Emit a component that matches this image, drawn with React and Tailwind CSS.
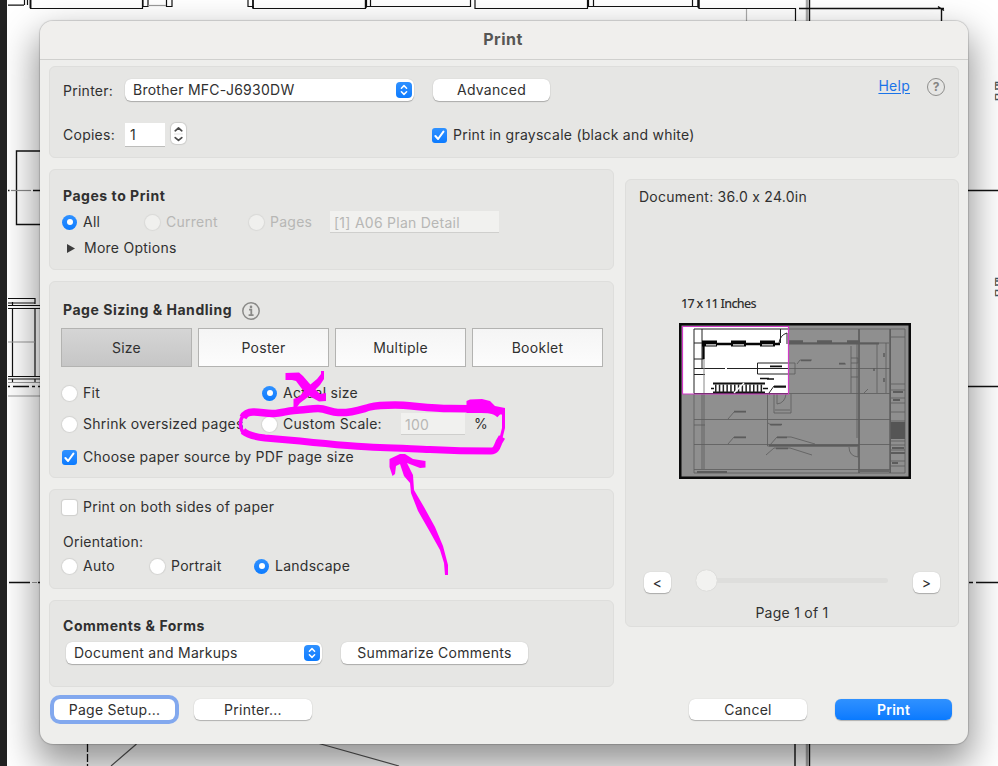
import { useState } from "react";
import clsx from "clsx";

const Panel = ({ className, children }) => (
  <section className={clsx("rounded-[6px] border border-[#dededc] bg-[#e6e6e4]", className)}>
    {children}
  </section>
);

const Button = ({ className, children }) => (
  <button
    className={clsx(
      "flex shrink-0 items-center justify-center rounded-[6px] leading-none shadow-[0_1px_1px_rgba(0,0,0,0.24),0_0_1px_rgba(0,0,0,0.2)]",
      className
    )}
  >
    {children}
  </button>
);

const Radio = ({ label, checked, disabled, onSelect, className }) => (
  <button
    onClick={onSelect}
    disabled={disabled}
    className={clsx("flex h-4 shrink-0 items-center gap-[6px] whitespace-nowrap text-left", disabled && "text-[#b7b7b5]", className)}
  >
    <span
      className={clsx(
        "flex size-[15px] shrink-0 items-center justify-center rounded-full",
        checked
          ? "bg-linear-to-b from-[#2f91ff] to-[#0a7bff]"
          : disabled
            ? "bg-[#f0f0ee] shadow-[0_0_1px_1px_rgba(0,0,0,0.06)]"
            : "bg-white shadow-[0_0_1px_1px_rgba(0,0,0,0.08)]"
      )}
    >
      {checked && <span className="size-[6px] rounded-full bg-white" />}
    </span>
    {label}
  </button>
);

const Checkbox = ({ label, checked, onToggle, className }) => (
  <button onClick={onToggle} className={clsx("flex h-4 shrink-0 items-center gap-[6px] whitespace-nowrap", className)}>
    <span
      className={clsx(
        "flex size-[15px] shrink-0 items-center justify-center rounded-[3px]",
        checked ? "bg-linear-to-b from-[#2f91ff] to-[#0a7bff]" : "bg-white shadow-[0_0_1px_1px_rgba(0,0,0,0.1)]"
      )}
    >
      {checked && (
        <svg width="11" height="11" viewBox="0 0 11 11" fill="none" stroke="#fff" strokeWidth="2" strokeLinecap="round" strokeLinejoin="round">
          <path d="M1.4 6 4.1 9 9.4 1.6" />
        </svg>
      )}
    </span>
    {label}
  </button>
);

const Select = ({ value, className }) => (
  <button
    className={clsx(
      "flex shrink-0 items-center justify-between rounded-[6px] bg-white pr-[2px] pl-2 leading-none shadow-[0_1px_1px_rgba(0,0,0,0.24),0_0_1px_rgba(0,0,0,0.2)]",
      className
    )}
  >
    {value}
    <span className="flex size-4 items-center justify-center rounded-[4px] bg-linear-to-b from-[#2f91ff] to-[#0a7bff]">
      <svg width="8" height="12" viewBox="0 0 8 12" fill="none" stroke="#fff" strokeWidth="1.5" strokeLinecap="round" strokeLinejoin="round">
        <path d="M1.4 4.2 4 1.6l2.6 2.6M1.4 7.8 4 10.4l2.6-2.6" />
      </svg>
    </span>
  </button>
);

const Heading = ({ className, children }) => (
  <h2 className={clsx("font-bold tracking-[0.54px]", className)}>{children}</h2>
);

const InfoIcon = () => (
  <svg width="18" height="18" viewBox="0 0 18 18" className="ml-[10px]" fill="none" stroke="#8a8a88" strokeWidth="1.5">
    <circle cx="9" cy="9" r="8.2" />
    <path d="M7 7.7h2.3v5.3M6.600 13.200h5" strokeWidth="1.8" />
    <circle cx="9" cy="4.900" r="1.3" fill="#8a8a88" stroke="none" />
  </svg>
);

// Drawing sheet that sits behind the dialog
const SheetBackground = () => (
  <svg className="absolute inset-0" width="998" height="766" viewBox="0 0 998 766" fill="none" stroke="#111" strokeWidth="1.2">
    <path d="M8 5.2H24M24.500 0V5M27.500 0V5M30.500 0V8.500H142.500V0M143 0V6.500H148V0M166.500 0V6.500H172V0M248 0V6.500H253V8.500H365.500V0M366.500 0V6.500H470.500V0M370.500 0V6M475 0V8.500H587.500V0M588.500 0V6.500H698V0M593.500 0V6M692.500 0V6M699 0V8.500H795.500V21" />
    <path d="M30.500 0V8M253 0V8M365.800 0V8M588 0V7M698.500 0V8" strokeWidth="1.8" />
    <path d="M148 5.500H166" stroke="#999" />
    <path d="M746.500 9V21" stroke="#aaa" />
    <path d="M807 0V21M807 744V766" stroke="#aaa" strokeWidth="2.5" />
    <path d="M809.500 0V21M799 8.500H944M941.500 9V21M938 6.500l6 4M795 744V766M809.500 744V766" strokeWidth="1.4" />
    <path d="M40 151H16.500V224.500H40M33 190.500H40M968 190.500H998M8 190.500h1.500" strokeWidth="1.4" />
    <path d="M11 190.500H31" stroke="#888" />
    <path d="M8 298.500H35V304M8 303H35M8 305.500H40M8 308.500H40M12.500 309V376M35 309V376M12.500 302V305M8 376.500H40M8 379H40M12.500 379V383M35 379V383" />
    <path d="M8 386.500h2M13 386.500H29M32 386.500h3M38 386.500h2M968 386.500H998M9 582.500H30M38 582.500h2M969 582.500H973M976 582.500H998" strokeWidth="1.4" />
    <path d="M8 342H35M8 396H40M8 382.500H40M32 582.500h5" stroke="#999" />
    <path d="M87.500 744V766" strokeWidth="1.3" strokeDasharray="8 2" />
    <path d="M136.500 744 111 766M319 743.500 399 766" stroke="#555" />
    {/* dimension ticks running off the right edge */}
    <path d="M995 82.500h3M995 85h3M995 89h3M995 94.500h3M995 99.500h3M995 278.500h3M995 281h3M995 285h3M995 290.500h3M995 295.500h3" stroke="#36556e" strokeWidth="1.3" />
    <path d="M995.500 82v8M995.500 94v6M995.500 278v8M995.500 290v6" stroke="#8d6a4a" />
    <path d="M0 0H7V766H0Z" fill="#222" stroke="none" />
  </svg>
);

const PlanLines = () => (
  <>
    <path d="M15 6H226V150H15ZM23 6V146M25 20V146M15 20H210M15 36H26M15 51H26M15 45.500H211M15 70.500H211M15 96.500H211M15 121.500H211M15 102H26M15 146.500H211" />
    <path d="M180 6V150M178 21V115M198 20V70M207 20V70M211.500 6V150" />
    <path d="M172 23V70M172 35h7v5h-7M172 54h7M88.500 71V123H179M95 71V90H112V71M96 87h15M98 71v10q8-1 9-10M170 124q0 9 9 10V124" />
    <path d="M49 96l6-7h12M49 121l6-7h12M90 72l5-7h12M89 100l3 2h10M91 122l7-8h14l24 7M87 132l8-7h16l22 7M118 41l3-4h12M160 41h7M185 70l4-4" />
    <path d="M78.500 40H116V51H78.500Z" />
  </>
);

const SheetPreview = () => (
  <svg width="232" height="156" viewBox="0 0 232 156" fill="none" className="block">
    <path d="M1.250 1.250H230.750V154.750H1.250Z" fill="#8f8f8f" stroke="#0b0b0b" strokeWidth="2.500" />
    <g stroke="#5c5c5c" strokeWidth="0.800">
      <PlanLines />
      <path d="M212 61H226M212 67H226M212 75H226M212 80H226M212 89H226M212 98H226M212 118H226M212 122H226M212 127H226M212 138H226M212 143H226M211.500 14H226" />
      <path d="M181 148H210M211 6V150M180 6V150" strokeWidth="1.400" />
      <path d="M110 20.500H200M90 122.500H180" strokeWidth="1.800" />
      <path d="M110 19h14M138 19h15M168 19h13" strokeWidth="3.500" />
      <path d="M18 149H48M212 130H226M214 69h10M214 77h7M213 125h12M213 140h6" strokeWidth="1.800" />
      <path d="M55 88.500h12M55 114.500h12M91 101.500h12M98 114.500h10M97 125.500h12M122 37.500h10M160 40.500h6M205 30v4M205 55v4M195 45v3" strokeWidth="1.500" />
    </g>
    <path d="M212 99H226V116H212Z" fill="#555" />
    <path d="M3 3H109V71H3Z" fill="#fff" />
    <g stroke="#222" strokeWidth="1">
      <path d="M15 6H109M15 6V70.500H109M23 6V46M15 20H25M15 36H25M15 51.500H26M15 45.500H109M101.500 6V20M100 20q1-8 8-10V21M78.500 40H109M78.500 40V51H109M90 70l5-7h12" />
      <path d="M25 36V70" stroke="#888" />
    </g>
    <path d="M24.500 19V36M23 21H101" stroke="#050505" strokeWidth="2.300" />
    <path d="M23 17.500H38V23.500H23ZM52 17.500H67V23.500H52ZM81 17.500H96V23.500H81Z" fill="#050505" />
    <path d="M27 21.800h10M54 21.800h11M83 21.800h11" stroke="#eee" strokeWidth="1.300" />
    <path d="M46 45.500h2" stroke="#fff" strokeWidth="1.500" />
    <path d="M34 60.500H86M34 69.500H86" stroke="#111" strokeWidth="2" />
    <path d="M36 65.500H84" stroke="#222" strokeWidth="8" strokeDasharray="1.500 2.300" />
    <path d="M55 70 65 60" stroke="#fff" strokeWidth="1.500" />
    <path d="M32 65.500h3M84 65.500h5M81 55.500h9M88 56h7M91 43.300h12M95 63.800h12" stroke="#111" strokeWidth="1.700" />
    <path d="M3.500 3.500H109.500V71H3.500Z" stroke="#d23bc8" strokeWidth="1.200" />
  </svg>
);

// Hand drawn pen marks on top of the dialog
const PenMarks = () => (
  <svg className="pointer-events-none absolute inset-0" width="998" height="766" viewBox="0 0 998 766" fill="none" stroke="#ff00fd" strokeLinejoin="round">
    <g fill="#ff00fd" stroke="none">
      <path d="M285.500 373 299 372.500 303 376 309 383 316 390 320 394 326 393V401L319 401.500 311 397 302 389 296 381 292 380H285.500Z" />
      <path d="M321 371H324V379L320 385 313 392 308 397 300 403 297 407H293.500V399L299 397 304 391 311 384 317 379 321 374Z" />
      <path d="M466.500 401 470 399.500 482 399 490 401 495 406 505 408V415L490 413H466.500Z" />
      <path d="M389.500 459 400 454H405L413 459 425.500 461V467.500L420 468 407 463 413 475 414 490 424 507 435 527 443 546 448 565V575H445L444 563 440 550 430 532 418 511 411 493 410 483 404 476 400 464 396 466 395 474 392.500 476 389.500 467Z" />
    </g>
    <path d="M243 417.500c2-4 6-5.500 10-5.500 8 0 14 2 21 1.500 8-.5 17-3.500 26-3.500 6 0 10-1.500 18-1.500 8 0 13 4 20 4 12 1 21-2.500 32-5.500 8-2 16-2 25-2 13 0 35 3.500 55 3.500 15 0 28 .5 38 1 6 .5 10 3 12 5" strokeWidth="7.500" />
    <path d="M243.500 415c-4 5-4 13 0 18" strokeWidth="3.500" />
    <path d="M243 431c5 4 13 6 22 7 12 1 24 2 35 3 28 3 60 6 80 6.500 20 .5 35 1.500 50 2 20 1 48 1.500 61 1.500 5 0 6-4 8-9l3-5" strokeWidth="7" />
    <path d="M503.500 412v16l-3 12" strokeWidth="3" />
  </svg>
);

export default function App() {
  const [copies, setCopies] = useState(1);
  const [grayscale, setGrayscale] = useState(true);
  const [sizing, setSizing] = useState("actual");
  const [paperSource, setPaperSource] = useState(true);
  const [bothSides, setBothSides] = useState(false);
  const [orientation, setOrientation] = useState("Landscape");
  const [tab, setTab] = useState("Size");

  return (
    <div className="relative flex h-[766px] w-[998px] overflow-hidden bg-white pt-[21px] pl-10 font-['Inter',sans-serif] text-[14px] leading-4 tracking-[0.26px] text-[#303030]">
      <SheetBackground />
      <div className="relative flex h-[723px] w-[928px] flex-col rounded-[13px] bg-[#eeeeec] shadow-[0_0_1px_1px_rgba(0,0,0,0.15),0_17px_36px_4px_rgba(0,0,0,0.42)]">
        <header className="flex h-[39px] shrink-0 items-center justify-center rounded-t-[13px] border-b border-[#d0d0ce] bg-[#f0efed] pr-0.5 pb-0.5 text-[16px] font-bold tracking-[0.5px] text-[#565654]">
          Print
        </header>

        <Panel className="mt-[6px] ml-[9px] h-[92px] w-[910px] shrink-0 pt-3 pl-[13px]">
          <div className="flex h-[22px] items-center">
            <span className="w-[62px] pt-0.5">Printer:</span>
            <Select value="Brother MFC-J6930DW" className="h-[22px] w-[289px]" />
            <Button className="ml-[19px] h-[22px] w-[117px] bg-white">Advanced</Button>
            <a href="#" className="mb-2 ml-auto text-[#1a73e8] underline underline-offset-2">Help</a>
            <span className="mr-[13px] mb-1.5 ml-[17px] flex size-[18px] items-center justify-center rounded-full border-[1.5px] border-[#8e8e8c] text-[12px] leading-none font-bold tracking-normal text-[#858583]">
              ?
            </span>
          </div>
          <div className="mt-[22px] flex h-6 items-center">
            <span className="w-[62px]">Copies:</span>
            <span className="flex h-6 w-10 items-center border-b border-[#bdbdbb] bg-white pl-[5px]">{copies}</span>
            <button
              onClick={() => setCopies(copies + 1)}
              className="mb-[3px] ml-[6px] flex h-[21px] w-[15px] items-center justify-center rounded-[5px] bg-white shadow-[0_0_1px_1px_rgba(0,0,0,0.11)]"
            >
              <svg width="9" height="18" viewBox="0 0 9 18" fill="none" stroke="#4a4a4a" strokeWidth="1.7" strokeLinecap="round" strokeLinejoin="round">
                <path d="M1.200 5.800 4.500 3l3.300 2.800M1.200 12.600l3.300 2.800 3.300-2.800" />
                <path d="M0 9h9" stroke="#e2e2e2" strokeWidth="1" />
              </svg>
            </button>
            <Checkbox
              label="Print in grayscale (black and white)"
              checked={grayscale}
              onToggle={() => setGrayscale(!grayscale)}
              className="ml-[246px]"
            />
          </div>
        </Panel>

        <div className="flex">
          <div className="mt-[11px] ml-[9px] flex w-[565px] flex-col">
            <Panel className="h-[101px] pt-[18px] pl-3">
              <Heading className="pl-px">Pages to Print</Heading>
              <div className="mt-[7px] flex h-[22px] items-center">
                <Radio label="All" checked className="w-[83px]" />
                <Radio label="Current" disabled className="w-[104px]" />
                <Radio label="Pages" disabled className="w-[81px]" />
                <span className="flex h-[22px] w-[169px] items-center border-b border-[#cfcfcd] bg-[#f1f1ef] pt-0.5 pl-1 text-[#b7b7b5]">
                  [1] A06 Plan Detail
                </span>
              </div>
              <div className="mt-[7px] flex h-4 items-center">
                <svg width="8" height="9" viewBox="0 0 8 9" className="ml-[5px]">
                  <path d="M0 0 8 4.500 0 9Z" fill="#3c3c3c" />
                </svg>
                <span className="ml-[9px]">More Options</span>
              </div>
            </Panel>

            <Panel className="mt-[11px] h-[197px] pt-5 pl-[11px]">
              <div className="flex h-[18px] items-center pl-[2px]">
                <Heading className="mb-0.5">Page Sizing &amp; Handling</Heading>
                <InfoIcon />
              </div>
              <div className="mt-2 flex gap-[6px]">
                {["Size", "Poster", "Multiple", "Booklet"].map((name) => (
                  <button
                    key={name}
                    onClick={() => setTab(name)}
                    className={clsx(
                      "h-[39px] w-[131px] border border-[#b3b3b1]",
                      tab === name ? "bg-linear-to-b from-[#d5d5d5] to-[#c6c6c6]" : "bg-linear-to-b from-[#f5f5f5] to-[#fcfcfc]"
                    )}
                  >
                    {name}
                  </button>
                ))}
              </div>
              <div className="mt-[18px] flex pl-px">
                <Radio label="Fit" checked={sizing === "fit"} onSelect={() => setSizing("fit")} className="w-[200px]" />
                <Radio label="Actual size" checked={sizing === "actual"} onSelect={() => setSizing("actual")} />
              </div>
              <div className="mt-[12px] flex h-[22px] items-center pl-px">
                <Radio label="Shrink oversized pages" checked={sizing === "shrink"} onSelect={() => setSizing("shrink")} className="w-[200px]" />
                <Radio label="Custom Scale:" checked={sizing === "custom"} onSelect={() => setSizing("custom")} className="w-[139px]" />
                <span className="flex h-[22px] w-[64px] items-center border-b border-[#cfcfcd] bg-[#f1f1ef] pt-0.5 pl-1 text-[#b7b7b5]">100</span>
                <span className="ml-[9px]">%</span>
              </div>
              <Checkbox
                label="Choose paper source by PDF page size"
                checked={paperSource}
                onToggle={() => setPaperSource(!paperSource)}
                className="mt-[14px] ml-px"
              />
            </Panel>

            <Panel className="mt-[11px] h-[100px] pt-[9px] pl-3">
              <Checkbox label="Print on both sides of paper" checked={bothSides} onToggle={() => setBothSides(!bothSides)} />
              <p className="mt-[19px] pl-px">Orientation:</p>
              <div className="mt-[8px] flex">
                <Radio label="Auto" checked={orientation === "Auto"} onSelect={() => setOrientation("Auto")} className="w-[88px]" />
                <Radio label="Portrait" checked={orientation === "Portrait"} onSelect={() => setOrientation("Portrait")} className="w-[104px]" />
                <Radio label="Landscape" checked={orientation === "Landscape"} onSelect={() => setOrientation("Landscape")} />
              </div>
            </Panel>

            <Panel className="mt-[11px] h-[87px] pt-[17px] pl-[13px]">
              <Heading>Comments &amp; Forms</Heading>
              <div className="mt-[8px] flex pl-[3px]">
                <Select value="Document and Markups" className="h-[22px] w-[256px]" />
                <Button className="ml-[19px] h-[22px] w-[187px] bg-white">Summarize Comments</Button>
              </div>
            </Panel>
          </div>

          <Panel className="mt-[21px] ml-[11px] flex h-[448px] w-[334px] flex-col">
            <p className="mt-[9px] pl-[13px]">Document: 36.0 x 24.0in</p>
            <p className="mt-[91px] pl-[55px] font-['Noto_Sans',sans-serif] text-[12.500px] font-medium tracking-[-0.700px]">17 x 11 Inches</p>
            <div className="mt-[11px] pl-[53px]">
              <SheetPreview />
            </div>
            <div className="mt-[91px] flex items-center pl-[18px]">
              <Button className="h-[21px] w-[27px] bg-white">&lt;</Button>
              <div className="mb-1 ml-[25px] flex h-[21px] w-[192px] items-center">
                <span className="size-[21px] shrink-0 rounded-full bg-[#f2f2f0] shadow-[0_0_1px_rgba(0,0,0,0.2)]" />
                <span className="h-[5px] flex-1 rounded-r-full bg-[#dededc]" />
              </div>
              <Button className="ml-[25px] h-[21px] w-[27px] bg-white">&gt;</Button>
            </div>
            <p className="mt-[10px] text-center">Page 1 of 1</p>
          </Panel>
        </div>

        <footer className="mt-3 flex pl-[14px]">
          <Button className="h-[21px] w-[121px] bg-white ring-4 ring-[#82a8ee]">Page Setup...</Button>
          <Button className="ml-[19px] h-[21px] w-[118px] bg-white">Printer...</Button>
          <Button className="ml-[377px] h-[21px] w-[118px] bg-white">Cancel</Button>
          <Button className="ml-[28px] h-[21px] w-[117px] bg-linear-to-b from-[#2f91ff] to-[#087aff] font-semibold text-white">Print</Button>
        </footer>
      </div>
      <PenMarks />
    </div>
  );
}
